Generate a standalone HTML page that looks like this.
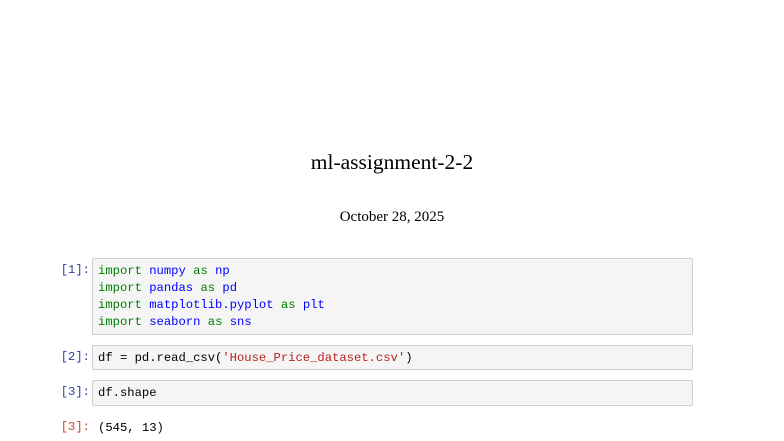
<!DOCTYPE html>
<html><head><style>
body{margin:0;width:784px;height:441px;background:#fff;position:relative;overflow:hidden;font-family:"Liberation Serif",serif}
.t{position:absolute;left:0;width:784px;text-align:center;color:#000}
.p{position:absolute;left:40px;width:50px;text-align:right;font:12.2px "Liberation Mono",monospace;color:#303f9f}
.box{position:absolute;left:92px;width:601px;background:#f5f5f5;border:1px solid #cfcfcf;border-radius:2px;box-sizing:border-box}
pre{margin:0;position:absolute;left:98px;font:12.2px/17px "Liberation Mono",monospace;color:#000}
.k{color:#008000}.n{color:#0000ff}.s{color:#ba2121}
</style></head><body>
<div class="t" style="top:150px;font-size:21.5px">ml-assignment-2-2</div>
<div class="t" style="top:209px;font-size:15px">October 28, 2025</div>

<div class="p" style="top:263px">[1]:</div>
<div class="box" style="top:258px;height:77px"></div>
<pre style="top:263px"><span class="k">import</span> <span class="n">numpy</span> <span class="k">as</span> <span class="n">np</span>
<span class="k">import</span> <span class="n">pandas</span> <span class="k">as</span> <span class="n">pd</span>
<span class="k">import</span> <span class="n">matplotlib.pyplot</span> <span class="k">as</span> <span class="n">plt</span>
<span class="k">import</span> <span class="n">seaborn</span> <span class="k">as</span> <span class="n">sns</span></pre>

<div class="p" style="top:350px">[2]:</div>
<div class="box" style="top:345px;height:25px"></div>
<pre style="top:350px">df = pd.read_csv(<span class="s">'House_Price_dataset.csv'</span>)</pre>

<div class="p" style="top:385px">[3]:</div>
<div class="box" style="top:380px;height:26px"></div>
<pre style="top:385px">df.shape</pre>

<div class="p" style="top:420px;color:#d84315">[3]:</div>
<pre style="top:420px">(545, 13)</pre>
</body></html>
